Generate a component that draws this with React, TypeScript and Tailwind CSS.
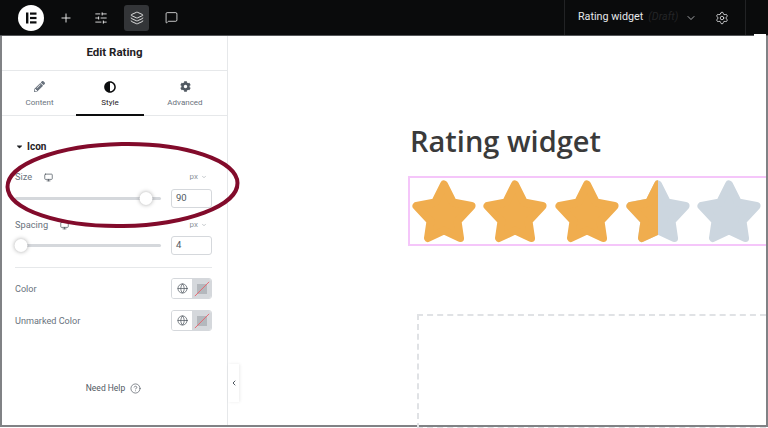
import { ChevronDown, ChevronLeft, CircleHelp, Globe, Layers, MessageSquare, Monitor, Plus, Settings, SlidersHorizontal } from "lucide-react";
import { FaAdjust, FaCaretDown, FaCog, FaPencilAlt } from "react-icons/fa";

function Star({ half, color = "#f0ad4e" }: { half?: boolean; color?: string }) {
  const d = "M32 4.5 L41 22.5 L59.5 26 L45.5 41 L48 58 L32 50.5 L16 58 L18.5 41 L4.5 26 L23 22.5 Z";
  return (
    <svg viewBox="0 0 64 64" className="h-[64px] w-[64px] shrink-0">
      <defs>
        <clipPath id="half-star">
          <rect x="0" y="-4" width="32" height="72" />
        </clipPath>
      </defs>
      <path d={d} fill={color} stroke={color} strokeWidth="8" strokeLinejoin="round" />
      {half && <path d={d} fill="#f0ad4e" stroke="#f0ad4e" strokeWidth="8" strokeLinejoin="round" clipPath="url(#half-star)" />}
    </svg>
  );
}

function SliderRow({ label, value, percent, className, gap }: { label: string; value: string; percent: number; className: string; gap: string }) {
  return (
    <div className={className}>
      <div className="flex h-4 items-center justify-between pr-[5px] text-[#69727d]">
        <div className="flex items-center gap-[12px]">
          <span className="text-[9.25px]">{label}</span>
          <Monitor size={9} strokeWidth={2} color="#515962" />
        </div>
        <div className="flex items-center gap-[3px] text-[8px] text-[#8d949b]">
          px <ChevronDown size={6} strokeWidth={2} />
        </div>
      </div>
      <div className={`flex items-center gap-[10px] ${gap}`}>
        <div className="relative h-[3px] w-[146px] rounded-full bg-[#d5d8dc]">
          <div
            className="absolute top-[-5px] h-[13px] w-[13px] -translate-x-1/2 rounded-full bg-white shadow-[0_0_4px_rgba(0,0,0,0.35)]"
            style={{ left: `${percent}%` }}
          />
        </div>
        <div className="flex h-[19px] w-[41px] items-center rounded-[3px] border border-[#d5d8dc] pl-[4px] text-[9.5px] text-[#515962]">
          {value}
        </div>
      </div>
    </div>
  );
}

function ColorRow({ label, className }: { label: string; className: string }) {
  return (
    <div className={`flex items-center justify-between ${className}`}>
      <span className="pt-[2px] text-[9.1px] text-[#69727d]">{label}</span>
      <div className="flex h-[21px] w-[41px] overflow-hidden rounded-[3px] border border-[#d5d8dc]">
        <div className="flex w-[20px] items-center justify-center bg-white">
          <Globe size={11} strokeWidth={1.6} color="#515962" />
        </div>
        <div className="relative flex flex-1 items-center justify-center bg-[#d5d8dc]">
          <div className="h-[10px] w-[10px] bg-[#b4b8bd]" />
          <svg viewBox="0 0 20 20" className="absolute inset-0 h-full w-full">
            <line x1="3" y1="18" x2="18" y2="3" stroke="#e8636b" strokeWidth="1" />
          </svg>
        </div>
      </div>
    </div>
  );
}

export default function App() {
  return (
    <div className="relative flex h-[428px] w-[768px] flex-col overflow-hidden bg-white font-['Roboto',sans-serif]">
      {/* Top bar */}
      <header className="flex h-[36px] shrink-0 items-center border-b border-[#55575a] bg-[#0a0b0c] text-white">
        <div className="ml-[18px] flex h-[26px] w-[26px] items-center justify-center rounded-full bg-white">
          <svg viewBox="0 0 26 26" className="h-[26px] w-[26px]">
            <rect x="8" y="7.5" width="2.4" height="11" fill="#0c0d0e" />
            <rect x="12" y="7.5" width="6.5" height="2.2" fill="#0c0d0e" />
            <rect x="12" y="11.9" width="6.5" height="2.2" fill="#0c0d0e" />
            <rect x="12" y="16.3" width="6.5" height="2.2" fill="#0c0d0e" />
          </svg>
        </div>
        <Plus size={14} strokeWidth={1.5} className="ml-[15px]" />
        <SlidersHorizontal size={14} strokeWidth={1.4} className="ml-[21px]" />
        <div className="ml-[16px] flex h-[26px] w-[25px] items-center justify-center rounded-[3px] bg-[#333538]">
          <Layers size={14} strokeWidth={1.4} />
        </div>
        <MessageSquare size={13} strokeWidth={1.4} className="ml-[16px]" />
        <div className="ml-auto flex h-full w-[182px] items-center border-x border-[#222325] pl-[13px]">
          <span className="text-[10.75px] text-[#e6e8ea]">Rating widget</span>
          <span className="ml-[5px] text-[10.75px] italic text-[#242527]">(Draft)</span>
          <ChevronDown size={12} strokeWidth={1.5} className="ml-[7px] text-[#d5d8dc]" />
          <Settings size={14} strokeWidth={1.4} className="ml-[18px] text-[#e6e8ea]" />
        </div>
        <div className="w-[22px]" />
      </header>
      <div className="absolute right-[2px] top-[34px] h-[2px] w-[12px] bg-white" />

      <div className="flex h-[391px] shrink-0 border-b-2 border-l-2 border-r-2 border-[#808285]">
        {/* Side panel */}
        <aside className="relative flex w-[226px] shrink-0 flex-col border-r border-[#e6e8ea]">
          <div className="flex h-[35px] shrink-0 items-center justify-center border-b border-[#e6e8ea] text-[11.5px] font-bold text-[#1f2124]">
            Edit Rating
          </div>
          <div className="flex h-[45px] shrink-0 border-b border-[#e6e8ea] pl-[1px]">
            <div className="flex w-[73px] flex-col items-center pt-[10px] text-[#69727d]">
              <FaPencilAlt size={11} color="#69727d" />
              <span className="mt-[5px] text-[8px] leading-[12px]">Content</span>
            </div>
            <div className="relative flex w-[68px] flex-col items-center pt-[10px] text-[#1f2124]">
              <FaAdjust size={12} color="#0c0d0e" />
              <span className="mt-[4px] text-[8px] leading-[12px]">Style</span>
              <div className="absolute bottom-[-1px] h-[2px] w-full bg-[#0c0d0e]" />
            </div>
            <div className="flex w-[82px] flex-col items-center pt-[10px] text-[#69727d]">
              <FaCog size={11} color="#515962" />
              <span className="mt-[5px] text-[8px] leading-[12px]">Advanced</span>
            </div>
          </div>
          <div className="flex flex-col pl-[13px] pr-[15px]">
            <div className="mt-[24px] flex h-[12px] items-center gap-[3px] text-[10px] font-bold text-[#1f2124]">
              <FaCaretDown size={9} />
              Icon
            </div>
            <SliderRow label="Size" value="90" percent={90} className="mt-[17px]" gap="mt-[4px]" />
            <SliderRow label="Spacing" value="4" percent={4} className="mt-[9px]" gap="mt-[3px]" />
            <div className="mt-[12px] h-px bg-[#e6e8ea]" />
            <ColorRow label="Color" className="mt-[10px]" />
            <ColorRow label="Unmarked Color" className="mt-[11px]" />
            <div className="mt-[51px] flex items-center justify-center gap-[5px] text-[8.5px] text-[#515962]">
              Need Help
              <CircleHelp size={11} strokeWidth={1.5} />
            </div>
          </div>
          {/* Collapse tab */}
          <div className="absolute right-[-12px] top-[328px] flex h-[38px] w-[11px] items-center justify-center bg-white shadow-[1px_0_3px_rgba(0,0,0,0.08)]">
            <ChevronLeft size={8} strokeWidth={3} color="#515962" />
          </div>
        </aside>

        {/* Canvas */}
        <main className="min-w-0 flex-1 pl-[180px] pt-[85px]">
          <h1 className="pl-[2px] font-['Open_Sans',sans-serif] text-[29px] font-semibold leading-[40px] text-[#3a3a3a]">Rating widget</h1>
          <div className="mt-[15px] flex h-[70px] w-[358px] items-center gap-[7.3px] border-2 border-r-0 border-[#f5c6fa] pl-[2px] pt-[2px]">
            <Star />
            <Star />
            <Star />
            <Star half color="#ccd6df" />
            <Star color="#ccd6df" />
          </div>
          <div className="ml-[9px] mt-[68px] h-[115px] w-[349px] border-2 border-r-0 border-dashed border-[#e0e2e5]" />
        </main>
      </div>

      {/* Annotation ring */}
      <svg viewBox="0 0 768 428" className="pointer-events-none absolute inset-0 h-[428px] w-[768px]">
        <ellipse cx="122.5" cy="185" rx="115" ry="41" fill="none" stroke="#820b2b" strokeWidth="4" transform="rotate(-1 122.5 185)" />
      </svg>
    </div>
  );
}
